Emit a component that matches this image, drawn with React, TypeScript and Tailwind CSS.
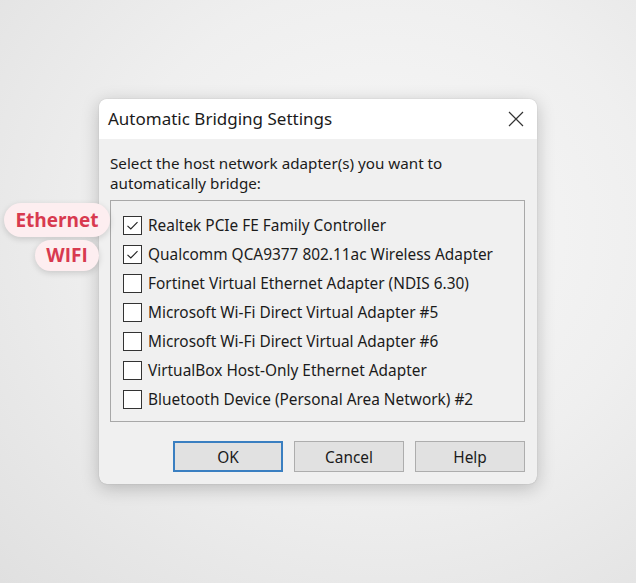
import React from "react";

const items: { label: string; checked: boolean }[] = [
  { label: "Realtek PCIe FE Family Controller", checked: true },
  { label: "Qualcomm QCA9377 802.11ac Wireless Adapter", checked: true },
  { label: "Fortinet Virtual Ethernet Adapter (NDIS 6.30)", checked: false },
  { label: "Microsoft Wi-Fi Direct Virtual Adapter #5", checked: false },
  { label: "Microsoft Wi-Fi Direct Virtual Adapter #6", checked: false },
  { label: "VirtualBox Host-Only Ethernet Adapter", checked: false },
  { label: "Bluetooth Device (Personal Area Network) #2", checked: false },
];

function CheckBox({ checked }: { checked: boolean }) {
  return (
    <div className="w-[19px] h-[19px] border border-[#333333] bg-white flex items-center justify-center shrink-0">
      {checked && (
        <svg width="13" height="13" viewBox="0 0 13 13">
          <path d="M1.5 6.8 L4.8 10 L11.5 3.2" fill="none" stroke="#222" strokeWidth="1.1" />
        </svg>
      )}
    </div>
  );
}

export default function App() {
  return (
    <div
      className="relative w-[636px] h-[583px] overflow-hidden bg-[radial-gradient(ellipse_at_60%_40%,#f8f8f8_0%,#efefef_50%,#e0e0e0_100%)] pt-[99px] pl-[99px]"
      style={{ fontFamily: '"Noto Sans", "Segoe UI", sans-serif' }}
    >
      <div className="w-[438px] h-[385px] rounded-[8px] overflow-hidden bg-[#f0f0f0] shadow-[0_4px_18px_rgba(0,0,0,0.22),0_0_1px_rgba(0,0,0,0.3)] flex flex-col">
        <div className="h-[40px] bg-white flex items-center justify-between pl-[9px] pr-[13px] shrink-0">
          <span className="text-[17px] text-[#1b1b1b]">Automatic Bridging Settings</span>
          <svg width="16" height="16" viewBox="0 0 16 16">
            <path d="M1 1 L15 15 M15 1 L1 15" stroke="#333" strokeWidth="1.2" fill="none" />
          </svg>
        </div>
        <div className="flex flex-col pl-[11px] pr-[12px] pt-[14px]">
          <p className="text-[15.2px] leading-[20px] text-[#1b1b1b]">
            Select the host network adapter(s) you want to
            <br />
            automatically bridge:
          </p>
          <div className="mt-[7px] h-[222px] border border-[#a8a8a8] pt-[10px] pl-[12px] flex flex-col">
            {items.map((it) => (
              <div key={it.label} className="h-[29px] flex items-center gap-[6px]">
                <CheckBox checked={it.checked} />
                <span className="text-[15.4px] text-[#1b1b1b] whitespace-nowrap">{it.label}</span>
              </div>
            ))}
          </div>
          <div className="mt-[19px] flex justify-end gap-[11px]">
            <button className="w-[110px] h-[31px] pt-[2px] bg-[#e1e1e1] border-2 border-[#3a7fc1] text-[15.4px] text-[#1b1b1b]">OK</button>
            <button className="w-[110px] h-[31px] pt-[2px] bg-[#e1e1e1] border border-[#adadad] text-[15.4px] text-[#1b1b1b]">Cancel</button>
            <button className="w-[110px] h-[31px] pt-[2px] bg-[#e1e1e1] border border-[#adadad] text-[15.4px] text-[#1b1b1b]">Help</button>
          </div>
        </div>
      </div>

      <div className="absolute left-[4px] top-[203px] w-[106px] h-[34px] rounded-full bg-[#fdeef0] shadow-[0_2px_6px_rgba(0,0,0,0.15)] flex items-center justify-center">
        <span className="text-[19px] font-bold text-[#d83a4f]" style={{ fontFamily: '"Open Sans", sans-serif' }}>Ethernet</span>
      </div>
      <div className="absolute left-[35px] top-[240px] w-[64px] h-[31px] rounded-full bg-[#fdeef0] shadow-[0_2px_6px_rgba(0,0,0,0.15)] flex items-center justify-center">
        <span className="text-[19px] font-bold text-[#d83a4f]" style={{ fontFamily: '"Open Sans", sans-serif' }}>WIFI</span>
      </div>
    </div>
  );
}
